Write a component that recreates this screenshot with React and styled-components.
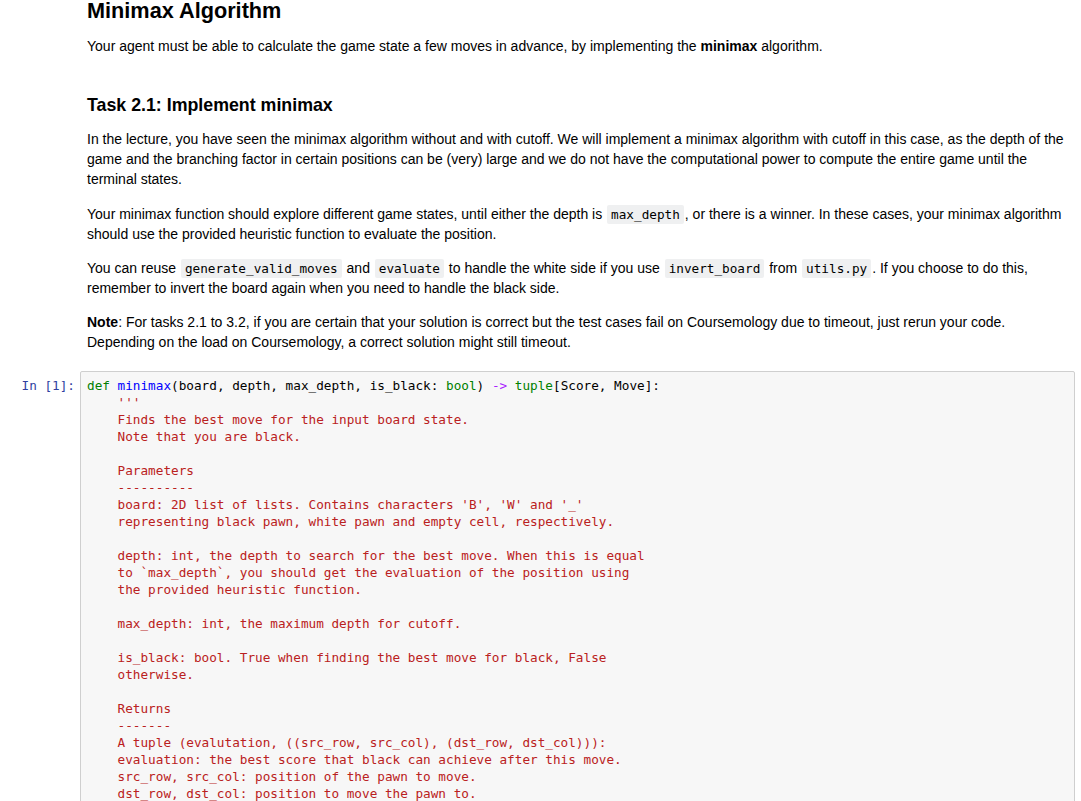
import React from 'react';
import styled, { createGlobalStyle } from 'styled-components';

const GlobalStyle = createGlobalStyle`
  html, body {
    margin: 0;
    padding: 0;
    background: #ffffff;
  }
  body {
    font-family: 'Liberation Sans', Arial, sans-serif;
    color: #000000;
    overflow: hidden;
  }
`;

const Notebook = styled.div`
  width: 1081px;
  display: flex;
  flex-flow: column;
`;

const MarkdownCell = styled.div`
  padding: 0 10px 0 87px;
  font-size: 14px;
  line-height: 20px;
  color: #000000;
`;

const H1 = styled.h2`
  margin: -4px 0 0;
  font-size: 21.7px;
  line-height: 30px;
  font-weight: bold;
`;

const H2 = styled.h3`
  margin: 37px 0 12px;
  font-size: 17.8px;
  line-height: 24px;
  font-weight: bold;
`;

const P = styled.p`
  margin: 0 0 ${(p) => (p.$gap === undefined ? 14 : p.$gap)}px;
`;

const Lead = styled(P)`
  margin-top: 10px;
`;

const InlineCode = styled.code`
  font-family: 'DejaVu Sans Mono', 'Liberation Mono', monospace;
  font-size: 12.7px;
  line-height: 1;
  background: #eff0f1;
  padding: 2px 4px;
  border-radius: 2px;
  margin: 0 1px;
`;

const CodeRow = styled.div`
  display: flex;
  align-items: flex-start;
  margin-top: 5px;
`;

const Prompt = styled.div`
  width: 80px;
  flex: none;
  box-sizing: border-box;
  padding: 6px 5px 0 0;
  text-align: right;
  font-family: 'DejaVu Sans Mono', 'Liberation Mono', monospace;
  font-size: 12.7px;
  line-height: 17px;
  color: #303f9f;
`;

const InputArea = styled.div`
  flex: 1;
  margin-right: 6px;
  background: #f7f7f7;
  border: 1px solid #cfcfcf;
  border-radius: 2px;
  padding: 5px 6px 20px;
`;

const Pre = styled.pre`
  margin: 0;
  font-family: 'DejaVu Sans Mono', 'Liberation Mono', monospace;
  font-size: 12.7px;
  line-height: 17px;
  color: #000000;
`;

const Tok = styled.span`
  color: ${(p) =>
    ({ kw: '#008000', fn: '#0000ff', bi: '#008000', op: '#aa22ff', str: '#ba2121' }[p.$t])};
`;

const docLines = [
  "'''",
  'Finds the best move for the input board state.',
  'Note that you are black.',
  '',
  'Parameters',
  '----------',
  "board: 2D list of lists. Contains characters 'B', 'W' and '_'",
  'representing black pawn, white pawn and empty cell, respectively.',
  '',
  'depth: int, the depth to search for the best move. When this is equal',
  'to `max_depth`, you should get the evaluation of the position using',
  'the provided heuristic function.',
  '',
  'max_depth: int, the maximum depth for cutoff.',
  '',
  'is_black: bool. True when finding the best move for black, False',
  'otherwise.',
  '',
  'Returns',
  '-------',
  'A tuple (evalutation, ((src_row, src_col), (dst_row, dst_col))):',
  'evaluation: the best score that black can achieve after this move.',
  'src_row, src_col: position of the pawn to move.',
  'dst_row, dst_col: position to move the pawn to.',
  "'''"
];

const App = () => {
  return (
    <>
      <GlobalStyle />
      <Notebook>
        <MarkdownCell>
          <H1>Minimax Algorithm</H1>
          <Lead $gap={0}>
            Your agent must be able to calculate the game state a few moves in advance, by
            implementing the <b>minimax</b> algorithm.
          </Lead>
          <H2>Task 2.1: Implement minimax</H2>
          <P $gap={15}>
            In the lecture, you have seen the minimax algorithm without and with cutoff. We will
            implement a minimax algorithm with cutoff in this case, as the depth of the game and the
            branching factor in certain positions can be (very) large and we do not have the
            computational power to compute the entire game until the terminal states.
          </P>
          <P>
            Your minimax function should explore different game states, until either the depth is{' '}
            <InlineCode>max_depth</InlineCode>, or there is a winner. In these cases, your minimax
            algorithm should use the provided heuristic function to evaluate the position.
          </P>
          <P>
            You can reuse <InlineCode>generate_valid_moves</InlineCode> and{' '}
            <InlineCode>evaluate</InlineCode> to handle the white side if you use{' '}
            <InlineCode>invert_board</InlineCode> from <InlineCode>utils.py</InlineCode>. If you
            choose to do this, remember to invert the board again when you need to handle the black
            side.
          </P>
          <P>
            <b>Note</b>: For tasks 2.1 to 3.2, if you are certain that your solution is correct but
            the test cases fail on Coursemology due to timeout, just rerun your code. Depending on
            the load on Coursemology, a correct solution might still timeout.
          </P>
        </MarkdownCell>
        <CodeRow>
          <Prompt>In&nbsp;[1]:</Prompt>
          <InputArea>
            <Pre>
              <Tok $t="kw">def</Tok> <Tok $t="fn">minimax</Tok>(board, depth, max_depth, is_black:{' '}
              <Tok $t="bi">bool</Tok>) <Tok $t="op">-&gt;</Tok> <Tok $t="bi">tuple</Tok>[Score,
              Move]:
              {'\n'}
              {docLines.map((l, i) => (
                <Tok key={i} $t="str">
                  {'    ' + l + '\n'}
                </Tok>
              ))}
            </Pre>
          </InputArea>
        </CodeRow>
      </Notebook>
    </>
  );
};

export default App;
